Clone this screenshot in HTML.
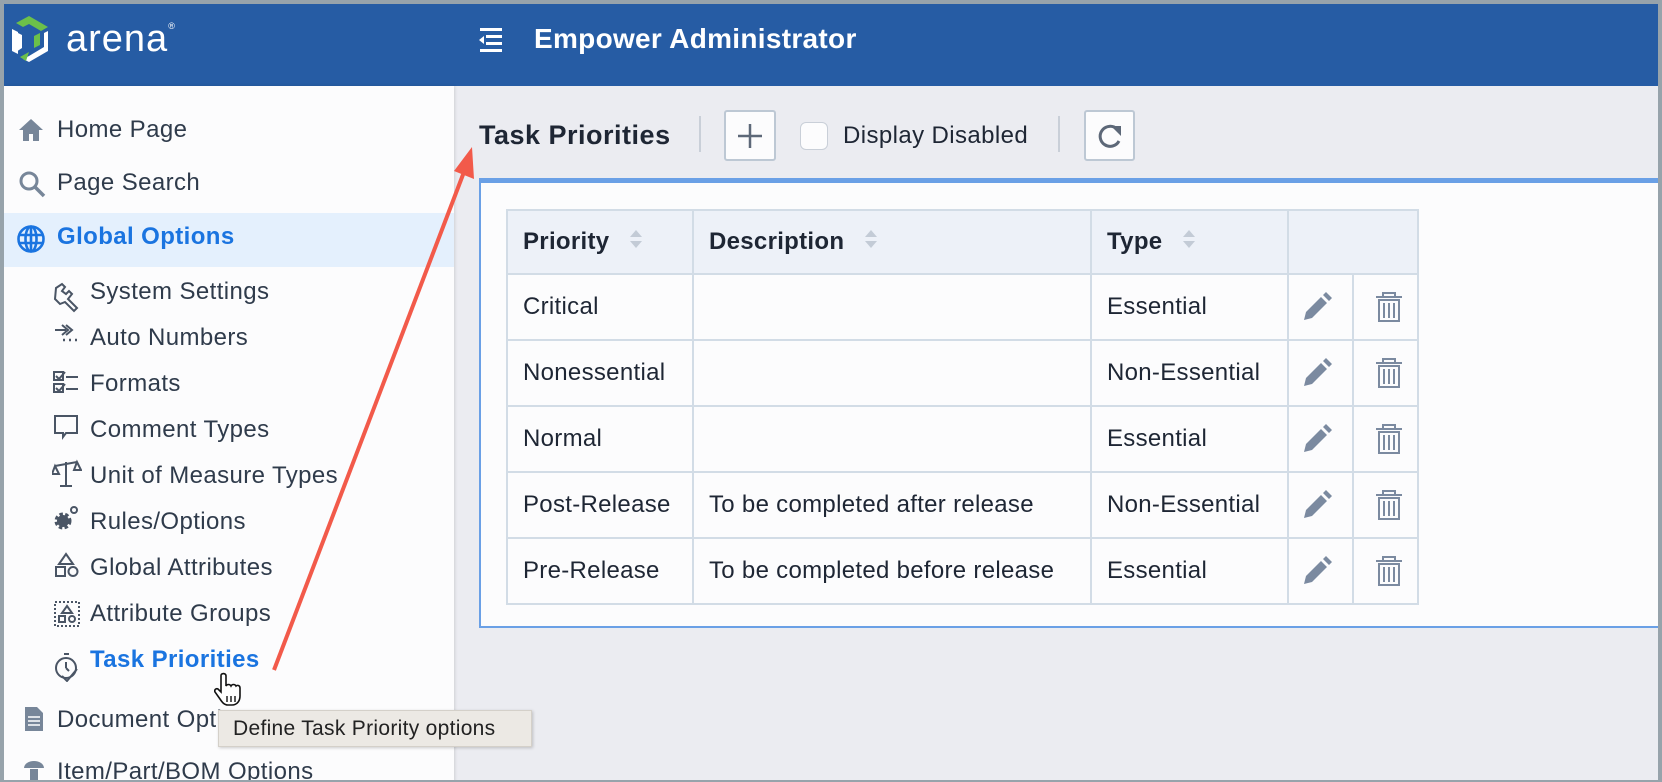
<!DOCTYPE html>
<html><head><meta charset="utf-8"><style>
*{box-sizing:border-box;margin:0;padding:0}
body{width:1662px;height:782px;overflow:hidden;background:#97a3ab;font-family:"Liberation Sans",sans-serif;position:relative}
.frame{position:absolute;left:4px;top:4px;width:1654px;height:776px;background:#ebecf1;overflow:hidden}
.hdr{position:absolute;left:0;top:0;width:1654px;height:82px;background:#265ca4}
.side{position:absolute;left:0;top:82px;width:450px;height:700px;background:#fcfcfd;box-shadow:1px 0 3px rgba(0,0,0,.12)}
.it{position:absolute;font-size:24px;letter-spacing:0.4px;color:#2f3b4b;white-space:nowrap}
.ic{position:absolute}
.t{position:absolute;white-space:nowrap}
table{border-collapse:collapse;position:absolute;left:502px;top:205px}
td,th{border:2px solid #d2dce6;font-size:24px;letter-spacing:0.3px;color:#1e2634;text-align:left;padding:0 0 0 15px;height:66px;background:#fcfcfd}
th{background:#edf1f8;font-weight:bold;height:64px}
.s{display:inline-block;margin-left:20px;vertical-align:middle}
</style></head><body>
<div class="frame">
<div class="hdr">
<svg class="ic" style="left:4px;top:10px" width="42" height="50" viewBox="0 0 42 50"><path d="M21 2 L40 13 L33 17 L21 10 L15 13 L8 9Z" fill="#6cc04a"/><path d="M8 18 L14 21 L14 34 L8 38Z" fill="#fff"/><path d="M4 15 L10 18 L10 40 L4 37Z" fill="#fff"/><path d="M26 22 L32 19 L32 31 L26 34Z" fill="#6cc04a"/><path d="M36 19 L40 17 L40 37 L21 48 L15 45 L21 42 L36 33Z" fill="#fff"/><path d="M21 38 L12 43 L18 47Z" fill="#6cc04a"/></svg>
<div class="t" style="left:62px;top:14px;font-size:38px;color:#fff;font-weight:300;letter-spacing:1px">arena<sup style="font-size:9px;vertical-align:22px">®</sup></div>
<svg class="ic" style="left:474px;top:22px" width="26" height="28" viewBox="0 0 26 28"><rect x="2" y="2" width="22" height="3" fill="#fff"/><rect x="8" y="9" width="16" height="3" fill="#fff"/><rect x="8" y="16" width="16" height="3" fill="#fff"/><rect x="2" y="23" width="22" height="3" fill="#fff"/><path d="M6 10 L1 14 L6 18Z" fill="#fff"/></svg>
<div class="t" style="left:530px;top:19px;font-size:28px;letter-spacing:0.3px;font-weight:bold;color:#fff">Empower Administrator</div>
</div>
<div class="side">
<svg class="ic" style="left:14px;top:32px" width="26" height="24" viewBox="0 0 26 24"><path d="M13 1 L25 12 L21 12 L21 23 L15 23 L15 16 L11 16 L11 23 L5 23 L5 12 L1 12Z" fill="#778699"/></svg>
<div class="it" style="left:53px;top:30px">Home Page</div>
<svg class="ic" style="left:14px;top:84px" width="28" height="28" viewBox="0 0 28 28"><circle cx="11" cy="11" r="8" stroke="#778699" stroke-width="3" fill="none"/><path d="M17 17 L26 26" stroke="#778699" stroke-width="3.5"/></svg>
<div class="it" style="left:53px;top:83px">Page Search</div>
<div style="position:absolute;left:0;top:127px;width:450px;height:54px;background:#e4f0fd"></div>
<svg class="ic" style="left:12px;top:138px" width="30" height="30" viewBox="0 0 30 30" fill="none" stroke="#1a74e0" stroke-width="2.6"><circle cx="15" cy="15" r="12.5"/><ellipse cx="15" cy="15" rx="5.5" ry="12.5"/><path d="M3 11H27M3 19H27M15 2.5V27.5"/></svg>
<div class="it" style="left:53px;top:137px;color:#1a74e0;font-weight:bold">Global Options</div>
<div class="it" style="left:86px;top:192px">System Settings</div>
<div class="it" style="left:86px;top:238px">Auto Numbers</div>
<div class="it" style="left:86px;top:284px">Formats</div>
<div class="it" style="left:86px;top:330px">Comment Types</div>
<div class="it" style="left:86px;top:376px">Unit of Measure Types</div>
<div class="it" style="left:86px;top:422px">Rules/Options</div>
<div class="it" style="left:86px;top:468px">Global Attributes</div>
<div class="it" style="left:86px;top:514px">Attribute Groups</div>
<div class="it" style="left:86px;top:560px;color:#1a74e0;font-weight:bold">Task Priorities</div>
<svg class="ic" style="left:48px;top:196px" width="30" height="400" viewBox="0 0 30 400" fill="none" stroke="#4a5565" stroke-width="2">
<path d="M4 6 L10 2 L13 5 L10 9 L14 12 L17 9 L20 12 L16 17 L25 26 L22 29 L13 20 L8 22 L3 17Z"/>
<path d="M3 48H14M10 43L16 48L10 53M14 43L20 48L14 53" />
<path d="M11 58h2M17 58h2M23 58h2" stroke-width="2.5"/>
<rect x="2" y="90" width="9" height="8"/><rect x="2" y="102" width="9" height="8"/><path d="M4 94l3 3l6-7M4 106l3 3l6-7M14 95h12M14 107h12" />
<path d="M3 134h22v17h-11l-3 4v-4h-8z"/>
<path d="M14 180v24M8 204h12M3 184l22-4M3 184l-3 8h7zM25 180l-3 8h7z"/>
<circle cx="11" cy="239" r="6" fill="#4a5565" stroke-width="5" stroke-dasharray="3 2"/><circle cx="22" cy="228" r="3" />
<path d="M14 272l7 10h-14z"/><rect x="4" y="285" width="9" height="9"/><circle cx="21" cy="289.5" r="4.5"/>
<rect x="3" y="320" width="24" height="24" stroke-dasharray="2 2"/><path d="M15 324l5 7h-10z"/><rect x="7" y="334" width="6" height="6"/><circle cx="20" cy="337" r="3"/>
<circle cx="14" cy="386" r="10"/><path d="M12 372h5M14 386v-6M14 386l3 3M10 394l5 5l10-12"/>
</svg>
<svg class="ic" style="left:20px;top:620px" width="20" height="26" viewBox="0 0 20 26"><path d="M1 1h12l6 6v18h-18z" fill="#778699"/><path d="M4 11h12M4 15h12M4 19h12" stroke="#fff" stroke-width="1.5"/></svg>
<div class="it" style="left:53px;top:620px">Document Options</div>
<svg class="ic" style="left:18px;top:674px" width="24" height="22" viewBox="0 0 24 22"><path d="M2 8a10 7 0 0 1 20 0z" fill="#778699"/><rect x="8" y="9" width="8" height="13" fill="#778699"/></svg>
<div class="it" style="left:53px;top:672px">Item/Part/BOM Options</div>
</div>
<div class="t" style="left:475px;top:116px;font-size:27px;letter-spacing:0.5px;font-weight:bold;color:#1e2634">Task Priorities</div>
<div style="position:absolute;left:695px;top:112px;width:2px;height:36px;background:#c9cfd8"></div>
<div style="position:absolute;left:720px;top:106px;width:52px;height:51px;border:2px solid #bdc8d4;border-radius:3px;background:#fcfcfd"></div>
<svg class="ic" style="left:732px;top:118px" width="28" height="28"><path d="M14 2v24M2 14h24" stroke="#5d6878" stroke-width="2.5"/></svg>
<div style="position:absolute;left:796px;top:118px;width:28px;height:28px;border:1.5px solid #c9cfd8;border-radius:6px;background:#fcfcfd"></div>
<div class="t" style="left:839px;top:118px;font-size:24px;letter-spacing:0.4px;color:#1e2634">Display Disabled</div>
<div style="position:absolute;left:1054px;top:112px;width:2px;height:36px;background:#c9cfd8"></div>
<div style="position:absolute;left:1080px;top:106px;width:51px;height:51px;border:2px solid #bdc8d4;border-radius:3px;background:#fcfcfd"></div>
<svg class="ic" style="left:1092px;top:118px" width="28" height="28" viewBox="0 0 28 28"><path d="M21 7A10 10 0 1 0 23 19" stroke="#5d6878" stroke-width="3" fill="none"/><path d="M15 4h10v10z" fill="#5d6878"/></svg>
<div style="position:absolute;left:475px;top:174px;width:1190px;height:450px;border:2px solid #6aa0e6;border-top-width:5px;background:#fcfcfd"></div>
<table>
<tr><th style="width:186px">Priority<span class="s"><svg width="14" height="20"><path d="M7 1l6 7H1zM7 19l6-7H1z" fill="#c3cbd6"/></svg></span></th><th style="width:398px">Description<span class="s"><svg width="14" height="20"><path d="M7 1l6 7H1zM7 19l6-7H1z" fill="#c3cbd6"/></svg></span></th><th style="width:197px">Type<span class="s"><svg width="14" height="20"><path d="M7 1l6 7H1zM7 19l6-7H1z" fill="#c3cbd6"/></svg></span></th><th colspan="2" style="width:130px"></th></tr>
<tr><td>Critical</td><td></td><td>Essential</td><td style="width:65px"></td><td></td></tr>
<tr><td>Nonessential</td><td></td><td>Non-Essential</td><td></td><td></td></tr>
<tr><td>Normal</td><td></td><td>Essential</td><td></td><td></td></tr>
<tr><td>Post-Release</td><td>To be completed after release</td><td>Non-Essential</td><td></td><td></td></tr>
<tr><td>Pre-Release</td><td>To be completed before release</td><td>Essential</td><td></td><td></td></tr>
</table>
<svg class="ic" style="left:1298px;top:286px" width="110" height="340" viewBox="0 0 110 340">
<g id="r"><path d="M2 30l2-8l15-15l6 6l-15 15z M21 5l3-3l6 6l-3 3z" fill="#7b8aa0"/><g fill="none" stroke="#7b8aa0" stroke-width="2"><path d="M74 7h26M81 7v-4h12v4M77 10h20v21h-20zM82 13v15M87 13v15M92 13v15"/></g></g>
<use href="#r" y="66"/><use href="#r" y="132"/><use href="#r" y="198"/><use href="#r" y="264"/>
</svg>
<div class="t" style="left:214px;top:706px;width:314px;height:37px;background:#ece9e4;border:1px solid #d4d0c9;box-shadow:1px 1px 3px rgba(0,0,0,.2);font-size:21px;letter-spacing:0.3px;color:#222;padding:6px 0 0 14px">Define Task Priority options</div>
<svg class="ic" style="left:210px;top:668px" width="28" height="36" viewBox="0 0 28 36"><path d="M8 2c2-1 4 0 4 2v10c1-2 4-2 5 0c1-2 4-2 5 0c1-1 4-1 4 2v8c0 5-3 9-8 9h-4c-4 0-6-3-8-6l-5-7c-1-2 1-4 3-3l3 3v-16c0-1 0-2 1-2z" fill="#fff" stroke="#111" stroke-width="1.6"/><path d="M13 24v6M17 24v6M21 24v6" stroke="#111" stroke-width="1.4"/></svg>
<svg class="ic" style="left:0;top:0" width="1654" height="776"><line x1="270" y1="666" x2="460" y2="168" stroke="#f25a4a" stroke-width="4"/><path d="M468 143l2 32l-20-8z" fill="#f25a4a"/></svg>
</div>
</body></html>
